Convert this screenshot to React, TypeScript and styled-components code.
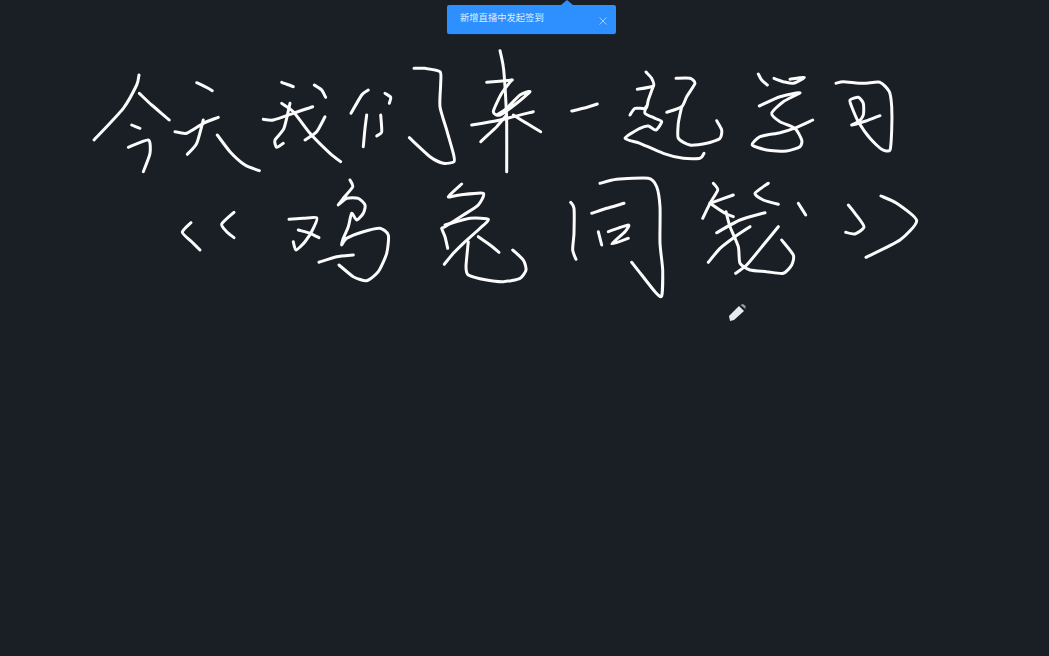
import React from 'react';
import styled, { createGlobalStyle } from 'styled-components';

const GlobalStyle = createGlobalStyle`
  html, body {
    margin: 0;
    padding: 0;
    height: 100%;
    background: #1a1f25;
    overflow: hidden;
  }
  #root {
    height: 100%;
  }
`;

const Board = styled.div`
  position: relative;
  width: 100%;
  height: 100vh;
  background: #1a1f25;
  overflow: hidden;
`;

const Canvas = styled.svg`
  display: block;
  width: 100%;
  height: 100%;
`;

const ToastLayer = styled.div`
  position: absolute;
  inset: 0 0 auto 0;
  display: flex;
  justify-content: center;
  padding: 5px 0 0 14px;
`;

const Toast = styled.div`
  position: relative;
  display: flex;
  justify-content: space-between;
  box-sizing: border-box;
  width: 169px;
  height: 29px;
  padding: 6px 9px 9px 13px;
  border-radius: 2px;
  background: #2d90fe;
  box-shadow: 0 1px 1px rgba(10, 50, 100, 0.6);
  color: #dcecff;
  font-family: 'Noto Sans CJK SC', 'Liberation Sans', sans-serif;
  font-size: 9.3px;
  line-height: 13px;
`;

const ToastArrow = styled.span`
  position: absolute;
  top: -5px;
  right: 43px;
  width: 0;
  height: 0;
  border-left: 6px solid transparent;
  border-right: 6px solid transparent;
  border-bottom: 5px solid #2d90fe;
`;

const ToastClose = styled.span`
  display: flex;
  align-self: flex-end;
  color: #9fcdfe;
`;

// handwriting, grouped by area; points are relative to the origin at 3x
type Area = { ox: number; oy: number; strokes: number[][] };

const areas: Area[] = [
  {
    ox: 80,
    oy: 40,
    strokes: [
      [177, 105, 170, 135, 130, 205, 42, 300],
      [178, 160, 215, 195, 268, 240],
      [155, 255, 180, 265],
      [145, 322, 205, 300, 210, 340, 190, 395],
      [350, 128, 375, 140, 397, 152],
      [285, 275, 320, 280, 370, 250, 415, 232],
      [370, 240, 350, 310, 322, 343],
      [412, 285, 450, 335, 495, 375, 538, 392],
      [605, 127, 640, 140],
      [550, 238, 580, 240, 640, 220, 698, 200],
      [630, 190, 612, 265, 585, 300, 590, 322, 610, 310],
      [675, 300, 710, 275, 735, 230],
      [605, 190, 640, 215, 690, 280, 750, 340, 782, 365],
      [703, 135, 725, 150, 737, 172],
    ],
  },
  {
    ox: 350,
    oy: 40,
    strokes: [
      [55, 150, 35, 165, 3, 220],
      [50, 225, 45, 265, 40, 320],
      [105, 160, 122, 172, 118, 190],
      [92, 225, 95, 275, 80, 288],
      [192, 85, 225, 85, 270, 95, 272, 130, 270, 200, 290, 270, 310, 340, 312, 365, 280, 370, 240, 350, 178, 293],
      [450, 32, 460, 80, 465, 140, 470, 250, 470, 395],
      [410, 127, 487, 120],
      [485, 120, 455, 160, 430, 215, 450, 225, 500, 190, 540, 155, 510, 165, 470, 205, 440, 225],
      [365, 255, 450, 240, 550, 215],
      [392, 305, 440, 260, 470, 225],
      [490, 225, 530, 250, 572, 275],
      [665, 213, 700, 205, 742, 192],
    ],
  },
  {
    ox: 620,
    oy: 50,
    strokes: [
      [78, 66, 95, 85, 100, 108, 52, 118],
      [100, 108, 85, 150, 78, 175, 45, 175, 30, 195],
      [78, 170, 75, 190, 105, 205, 125, 215, 108, 240, 85, 228, 60, 235, 15, 265, 60, 280, 130, 310, 190, 325, 240, 325, 252, 310],
      [168, 85, 210, 85, 225, 100, 200, 140, 185, 170, 140, 187],
      [185, 170, 175, 220, 175, 265, 210, 285, 260, 280, 300, 265, 305, 240, 290, 212],
      [415, 72, 425, 90, 442, 105],
      [462, 85, 490, 95, 520, 100, 553, 82, 510, 88],
      [418, 168, 480, 140, 540, 128, 490, 155, 455, 190, 480, 215, 525, 235, 545, 270, 540, 290, 500, 303, 440, 300, 397, 285, 420, 260, 480, 248, 530, 232, 578, 210],
      [648, 100, 670, 95, 730, 100, 780, 97, 808, 125, 815, 170, 815, 240, 810, 300, 785, 298, 750, 265, 715, 215, 695, 170, 690, 150, 715, 142, 730, 160, 730, 195, 715, 215, 695, 225, 740, 212, 780, 197],
    ],
  },
  {
    ox: 170,
    oy: 170,
    strokes: [
      [63, 158, 37, 187, 65, 215, 90, 240],
      [192, 127, 155, 162, 170, 185, 192, 203],
      [357, 148, 400, 145, 440, 143, 430, 175, 405, 215, 378, 240, 370, 215],
      [385, 180, 420, 190, 447, 203],
      [540, 30, 548, 50, 520, 85, 505, 105, 530, 85, 565, 85, 585, 105, 580, 130, 560, 150, 545, 130, 535, 170, 520, 205, 515, 225, 530, 205, 580, 185, 630, 175, 655, 195, 650, 250, 625, 305, 590, 332, 550, 320, 507, 285],
      [447, 277, 500, 260, 550, 255],
      [875, 42, 835, 80, 870, 75, 940, 70, 925, 105, 880, 135, 825, 170, 815, 175, 825, 200, 833, 235],
      [825, 165, 900, 145, 955, 148, 930, 175, 880, 220, 850, 250, 823, 283],
      [925, 200, 960, 225, 987, 247],
      [895, 215, 888, 290, 895, 315, 950, 330, 1000, 335, 1050, 325, 1068, 300, 1060, 270, 1028, 240],
    ],
  },
  {
    ox: 550,
    oy: 170,
    strokes: [
      [62, 97, 72, 115, 72, 190, 68, 240, 78, 268],
      [150, 40, 200, 28, 295, 25, 320, 50, 330, 110, 330, 220, 338, 300, 335, 378, 315, 365, 275, 315, 245, 277],
      [125, 130, 170, 115, 222, 100],
      [145, 185, 155, 225],
      [175, 185, 235, 165, 225, 185, 185, 222, 235, 205],
      [490, 40, 503, 60, 480, 100, 458, 145],
      [480, 100, 525, 130, 550, 140],
      [480, 100, 550, 75],
      [655, 40, 615, 70, 640, 90, 685, 103],
      [500, 188, 570, 150, 645, 128],
      [600, 170, 555, 200, 510, 235, 475, 277],
      [528, 125, 540, 170, 565, 230, 570, 280, 600, 300, 650, 305, 700, 310, 725, 285, 730, 255, 695, 210],
      [685, 170, 640, 225, 590, 285, 557, 310],
      [745, 100, 767, 135],
      [895, 105, 915, 130, 942, 170, 915, 192, 887, 187],
      [993, 78, 1040, 100, 1100, 152, 1050, 210, 948, 262],
    ],
  },
];

// catmull-rom through every point, with a low tension so corners stay sharp
const toPath = (pts: number[], ox: number, oy: number) => {
  const p: [number, number][] = [];
  for (let i = 0; i < pts.length; i += 2) {
    p.push([ox + pts[i] / 3, oy + pts[i + 1] / 3]);
  }
  const k = 0.11;
  let d = `M${p[0][0].toFixed(1)} ${p[0][1].toFixed(1)}`;
  for (let i = 0; i < p.length - 1; i++) {
    const a = p[Math.max(i - 1, 0)];
    const b = p[i];
    const c = p[i + 1];
    const e = p[Math.min(i + 2, p.length - 1)];
    const c1x = b[0] + (c[0] - a[0]) * k;
    const c1y = b[1] + (c[1] - a[1]) * k;
    const c2x = c[0] - (e[0] - b[0]) * k;
    const c2y = c[1] - (e[1] - b[1]) * k;
    d += ` C${c1x.toFixed(1)} ${c1y.toFixed(1)} ${c2x.toFixed(1)} ${c2y.toFixed(1)} ${c[0].toFixed(1)} ${c[1].toFixed(1)}`;
  }
  return d;
};

const App: React.FC = () => (
  <Board>
    <GlobalStyle />
    <Canvas viewBox="0 0 1049 656">
      <g fill="none" stroke="#fbfbfb" strokeWidth={3} strokeLinecap="round" strokeLinejoin="round">
        {areas.map((a) =>
          a.strokes.map((s, i) => <path key={`${a.ox}-${a.oy}-${i}`} d={toPath(s, a.ox, a.oy)} />)
        )}
      </g>
      <g fill="#e9ebee">
        <path d="M729 316 L739 306 L744 311 L734 320 L730 321 Z" />
        <path d="M740.5 305 L743 304 L745.5 306 L745.5 309 Z" fill="#9a9ea4" />
      </g>
    </Canvas>
    <ToastLayer>
      <Toast>
        新增直播中发起签到
        <ToastArrow />
        <ToastClose>
          <svg width="8" height="8" viewBox="0 0 8 8" fill="none" stroke="currentColor" strokeWidth="1">
            <path d="M0.5 0.5 L7.5 7.5 M7.5 0.5 L0.5 7.5" />
          </svg>
        </ToastClose>
      </Toast>
    </ToastLayer>
  </Board>
);

export default App;
